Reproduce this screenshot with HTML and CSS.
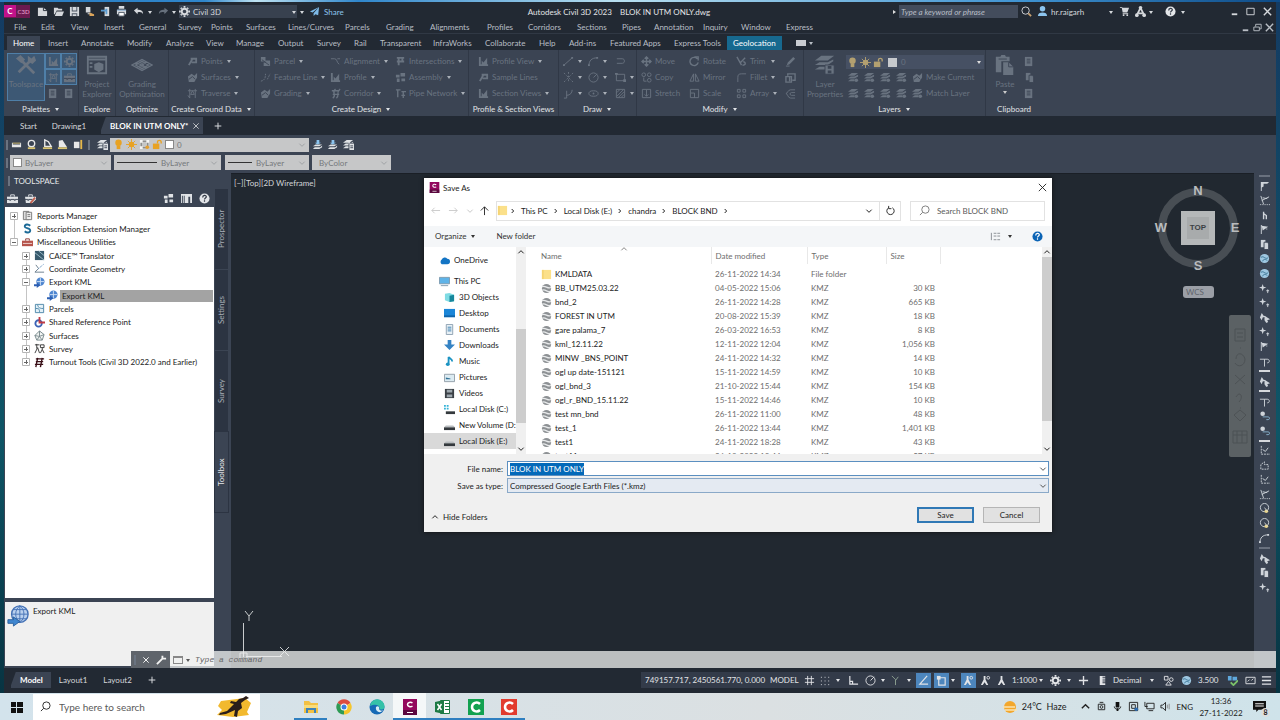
FILE: index.html
```html
<!DOCTYPE html>
<html lang="en">
<head>
    <meta charset="UTF-8">
    <meta name="viewport" content="width=device-width, initial-scale=1.0">
    <title>Autodesk Civil 3D 2023 - BLOK IN UTM ONLY.dwg</title>
    <link rel="stylesheet" href="styles.css">
</head>
<body>

<!-- Icon sprite -->
<svg class="sprite" aria-hidden="true">
    <symbol id="new" viewBox="0 0 12 12"><path fill="currentColor" d="M1 2h6l4 3v6H1z"/><path stroke="#222933" d="M7 2v3h4"/></symbol>
    <symbol id="open" viewBox="0 0 12 12"><path fill="currentColor" d="M1 2h4l1 1h4v2H4L2 9H1zM4 6h8l-2 5H2z"/></symbol>
    <symbol id="save" viewBox="0 0 12 12"><path fill="currentColor" d="M1 1h10v10H1z"/><path fill="#4c5563" d="M3 1h1v4h4V1h1v5H3zM3 8h6v3H8V9H4v2H3z"/></symbol>
    <symbol id="saveas" viewBox="0 0 12 12"><path fill="currentColor" d="M2 1h5v6H2zM4 8h4v1H4z"/><path fill="#d9a35a" d="M6 7l5 2v2H6z"/></symbol>
    <symbol id="export" viewBox="0 0 12 12"><path fill="currentColor" d="M5 1h5v10H5z"/><path stroke="#5b9bd0" stroke-width="2" d="M1 5h5M7 3v6"/></symbol>
    <symbol id="print" viewBox="0 0 12 12"><path fill="#d7dbe0" d="M3 0h6v3H3zM1 4h10v5H1z"/><path fill="#7fa8cf" d="M1 4h10v1H1z"/><path fill="#fff" stroke="#4c5563" d="M3 7h6v4H3z"/></symbol>
    <symbol id="undo" viewBox="0 0 12 12"><path fill="currentColor" d="M1 5l4-3v2c4 0 6 1 6 5-1-2-3-3-6-2v2z"/></symbol>
    <symbol id="redo" viewBox="0 0 12 12"><path fill="currentColor" d="M11 5L7 2v2C3 4 1 5 1 9c1-2 3-3 6-2v2z"/></symbol>
    <symbol id="gear" viewBox="0 0 12 12"><circle cx="6" cy="6" r="3" stroke="currentColor" stroke-width="2"/><path stroke="currentColor" stroke-width="2" d="M6 0v2M6 10v2M0 6h2M10 6h2M2 2l1 1M9 9l1 1M2 10l1-1M9 3l1-1"/></symbol>
    <symbol id="plane" viewBox="0 0 12 12"><path fill="#7db9e8" d="M11 1L1 6l3 1zM11 1L5 8v3l2-2 3 1z"/></symbol>
    <symbol id="caret" viewBox="0 0 6 6"><path fill="currentColor" d="M1 2h4L3 5z"/></symbol>
    <symbol id="search" viewBox="0 0 12 12"><circle cx="7" cy="5" r="4" stroke="currentColor"/><path stroke="currentColor" d="M4 8l-3 3"/></symbol>
    <symbol id="searchr" viewBox="0 0 12 12"><circle cx="5" cy="5" r="4" stroke="currentColor"/><path stroke="#c8a070" stroke-width="2" d="M8 8l3 3"/></symbol>
    <symbol id="user" viewBox="0 0 12 12"><circle cx="6" cy="3" r="3" fill="#8cc4ee"/><path fill="#8cc4ee" d="M1 11c0-3 2-4 5-4s5 1 5 4z"/></symbol>
    <symbol id="cart" viewBox="0 0 12 12"><path fill="currentColor" d="M1 1h2l1 1h7L9 7H4L3 2H1zM4 8h6v1H4z"/><circle cx="5" cy="10" r="1" fill="currentColor"/><circle cx="9" cy="10" r="1" fill="currentColor"/></symbol>
    <symbol id="adsk" viewBox="0 0 12 12"><path stroke="currentColor" stroke-width="2" d="M6 2L2 10M6 2l4 8M4 8h4"/><circle cx="6" cy="2" r="2" fill="currentColor"/><circle cx="2" cy="10" r="2" fill="currentColor"/><circle cx="10" cy="10" r="2" fill="currentColor"/></symbol>
    <symbol id="help" viewBox="0 0 12 12"><circle cx="6" cy="6" r="5.5" fill="#e4e6e9"/><path stroke="#333b47" stroke-width="1.3" d="M4 5c0-3 4-3 4-1 0 1.400-2 1.400-2 3M6 8v1.500"/></symbol>
    <symbol id="helpb" viewBox="0 0 12 12"><circle cx="6" cy="6" r="5.500" fill="#0a63b5"/><path stroke="#fff" stroke-width="1.300" d="M4 5c0-3 4-3 4-1 0 1.400-2 1.400-2 3M6 8v1.500"/></symbol>
    <symbol id="min" viewBox="0 0 12 12"><path stroke="currentColor" stroke-width="2" d="M3 9h6"/></symbol>
    <symbol id="max" viewBox="0 0 12 12"><path stroke="currentColor" d="M2 2.500h8v7H2z"/></symbol>
    <symbol id="restore" viewBox="0 0 12 12"><path stroke="currentColor" d="M2 5.500h6v4H2zM4 5V2.500h6v5H8"/></symbol>
    <symbol id="x" viewBox="0 0 12 12"><path stroke="currentColor" stroke-width="1.500" d="M2 2l8 8M10 2l-8 8"/></symbol>
    <symbol id="xthin" viewBox="0 0 12 12"><path stroke="currentColor" d="M2 2l8 8M10 2l-8 8"/></symbol>
    <symbol id="plus" viewBox="0 0 12 12"><path stroke="currentColor" stroke-width="1.500" d="M6 1v10M1 6h10"/></symbol>
    <symbol id="tools" viewBox="0 0 24 24"><path stroke="currentColor" stroke-width="3" d="M6 6l15 15M17 7L4 20"/><path fill="currentColor" d="M1 5l5-4 5 5-4 4zM14 2l4 3 3-3 2 5-4 4-5-3z"/></symbol>
    <symbol id="explorer" viewBox="0 0 24 24"><path stroke="currentColor" stroke-width="2" d="M2 3h20v18H2zM2 6h20"/><path fill="currentColor" d="M14 9l5 2v6l-5 3-5-3v-6zM4 9h3v2H4zM4 13h3v2H4z"/></symbol>
    <symbol id="grading" viewBox="0 0 24 24"><path stroke="currentColor" stroke-width="1.500" d="M1 12l11-6 11 6-11 6zM5 12l7-4 7 4-7 4zM6 9l11 6M17 9L6 15"/><circle cx="12" cy="12" r="2" stroke="currentColor"/></symbol>
    <symbol id="flag" viewBox="0 0 12 12"><path stroke="currentColor" stroke-width="2" d="M2 10l4-7M4 3h6v4H5"/></symbol>
    <symbol id="surf" viewBox="0 0 12 12"><path fill="currentColor" d="M1 5l4-3 3 2 3-3v5l-3 5H2z"/><path stroke="#3b4453" d="M2 8l4-3 3 3"/></symbol>
    <symbol id="trav" viewBox="0 0 12 12"><path stroke="currentColor" d="M1 3h10M3 1v10M9 1v10M1 8l2 3M6 3l-2 4h4z"/></symbol>
    <symbol id="parcel" viewBox="0 0 12 12"><path fill="currentColor" d="M1 1h5v5H1zM6 5h5v6H4V7h2z"/><path stroke="#3b4453" d="M2 4l8 6"/></symbol>
    <symbol id="line" viewBox="0 0 12 12"><path stroke="currentColor" d="M1 10l9-8"/><path fill="currentColor" d="M0 9h2v2H0zM9 1h2v2H9z"/></symbol>
    <symbol id="feat" viewBox="0 0 12 12"><path stroke="currentColor" stroke-dasharray="2 1" d="M1 10c4-1 5-3 5-8M8 8l3-6"/></symbol>
    <symbol id="align" viewBox="0 0 12 12"><path stroke="currentColor" d="M1 3h4c3 0 2 4 5 6M8 3h3"/></symbol>
    <symbol id="prof" viewBox="0 0 12 12"><path fill="currentColor" d="M1 1h2v8h8v2H1zM4 5l2 2 4-5v7H4z"/></symbol>
    <symbol id="corr" viewBox="0 0 12 12"><path stroke="currentColor" stroke-width="1.500" d="M3 11C8 8 1 5 6 1M7 11c4-3-1-6 4-10M2 3h8M3 7h7"/></symbol>
    <symbol id="inter" viewBox="0 0 12 12"><path stroke="currentColor" stroke-width="2" d="M2 2h8M2 6h8M4 1v9M8 1v6"/></symbol>
    <symbol id="assem" viewBox="0 0 12 12"><path fill="currentColor" d="M1 3h4v3H1zM6 1h5v4H6zM2 7h3v4H2zM7 7h4v3H7z"/></symbol>
    <symbol id="pipe" viewBox="0 0 12 12"><path stroke="currentColor" stroke-width="1.500" d="M1 2h5M3 2v8M7 4h5M9 4v7M7 8h4"/></symbol>
    <symbol id="arc" viewBox="0 0 12 12"><path stroke="currentColor" d="M1 11c0-6 3-9 9-9"/><path fill="currentColor" d="M0 9h2v2H0zM9 1h2v2H9z"/></symbol>
    <symbol id="poly" viewBox="0 0 12 12"><path stroke="currentColor" d="M2 3h6c3 0 3 5 0 5H2"/></symbol>
    <symbol id="pts" viewBox="0 0 12 12"><path stroke="currentColor" stroke-dasharray="2 2" d="M1 1l10 10M11 1L1 11M6 0v12"/></symbol>
    <symbol id="circ" viewBox="0 0 12 12"><circle cx="6" cy="6" r="5" stroke="currentColor"/><path stroke="currentColor" d="M6 6l4-4"/></symbol>
    <symbol id="rect" viewBox="0 0 12 12"><path stroke="currentColor" d="M1.500 2.500h9v7h-9z"/><path fill="currentColor" d="M0 1h3v2H0zM9 8h3v3H9z"/></symbol>
    <symbol id="pline" viewBox="0 0 12 12"><path stroke="currentColor" d="M1 11h3V3M4 8c4 0 6-3 6-6"/></symbol>
    <symbol id="ell" viewBox="0 0 12 12"><ellipse cx="6" cy="6" rx="5" ry="3" stroke="currentColor"/><circle cx="6" cy="6" r="1" fill="currentColor"/></symbol>
    <symbol id="hatch" viewBox="0 0 12 12"><path stroke="currentColor" d="M1.500 1.500h9v9h-9zM2 5l3-3M2 9l7-7M4 10l6-6M7 10l3-3"/></symbol>
    <symbol id="move" viewBox="0 0 12 12"><path stroke="currentColor" stroke-width="1.500" d="M6 1v10M1 6h10M4 3l2-2 2 2M4 9l2 2 2-2M3 4L1 6l2 2M9 4l2 2-2 2"/></symbol>
    <symbol id="copy" viewBox="0 0 12 12"><circle cx="3" cy="3" r="2" stroke="currentColor"/><circle cx="9" cy="3" r="2" stroke="currentColor"/><circle cx="9" cy="9" r="2" stroke="currentColor"/><path stroke="currentColor" d="M3 6v4h3"/></symbol>
    <symbol id="stretch" viewBox="0 0 12 12"><path stroke="currentColor" d="M1.500 1.500h9v9h-9zM6 2v7M4 7l2 2 2-2"/></symbol>
    <symbol id="rotate" viewBox="0 0 12 12"><path stroke="currentColor" stroke-width="1.500" d="M9 3a4.500 4.500 0 1 0 1 4M6 1h4v4"/></symbol>
    <symbol id="mirror" viewBox="0 0 12 12"><path stroke="currentColor" d="M5 2v8H1zM7 2v8h4z"/></symbol>
    <symbol id="scale" viewBox="0 0 12 12"><path stroke="currentColor" d="M1.500 1.500h9v9h-9zM2 5.500h4v5"/></symbol>
    <symbol id="trim" viewBox="0 0 12 12"><path stroke="currentColor" stroke-width="1.500" d="M1 1l5 9M10 2L5 7M7 10c4 0 4-3 1-4"/></symbol>
    <symbol id="fillet" viewBox="0 0 12 12"><path stroke="currentColor" d="M2 11V6c0-3 1-4 4-4h5"/></symbol>
    <symbol id="array" viewBox="0 0 12 12"><path stroke="currentColor" d="M1.500 1.500h3v3h-3zM7.500 1.500h3v3h-3zM1.500 7.500h3v3h-3zM7.500 7.500h3v3h-3z"/></symbol>
    <symbol id="erase" viewBox="0 0 12 12"><path fill="currentColor" d="M9 1l2 2-6 6-2-2zM3 7l2 2-3 1z"/><path stroke="currentColor" d="M1 11h4"/></symbol>
    <symbol id="box" viewBox="0 0 12 12"><path stroke="currentColor" stroke-width="1.500" d="M1 5h6v6H1zM3 4V2h8v7H8M5 5v5"/></symbol>
    <symbol id="offset" viewBox="0 0 12 12"><path stroke="currentColor" d="M11 2H6C3 2 3 6 1 6c2 0 2 5 5 5h5M11 5H7c-2 0-2 3 0 3h4"/></symbol>
    <symbol id="layers" viewBox="0 0 24 24"><path fill="currentColor" d="M1 7l7-5h14l-7 5zM1 12l5-3h9l6-3v2l-6 4zM1 17l5-3h7v3z"/><path fill="currentColor" stroke="#3b4453" d="M12 12h10v10H12z"/><path fill="#3b4453" d="M15 13h4v3h-4zM15 18h4v3h-4z"/></symbol>
    <symbol id="lay" viewBox="0 0 12 12"><path fill="currentColor" d="M0 4l4-3h7L7 4zM0 7l3-2h4l4-2v2L7 7zM0 10l3-2h4v2z"/><circle cx="9" cy="9" r="2" fill="currentColor"/></symbol>
    <symbol id="layp" viewBox="0 0 12 12"><path fill="currentColor" d="M0 4l4-3h7L7 4zM0 7l3-2h4l4-2v1H6v3H0zM0 10l3-2h3v2z"/><path fill="currentColor" d="M7 5h5v7H7z"/><path stroke="#3b4453" d="M8 7.500h3M8 9.500h3"/></symbol>
    <symbol id="layu" viewBox="0 0 12 12"><path fill="currentColor" d="M1 8l3-2h7L8 8zM1 11l2-2h6l2-2v2l-3 2z"/><path fill="#8cc4ee" d="M5 1h3v3h2L6 6 3 4h2z"/></symbol>
    <symbol id="paste" viewBox="0 0 24 24"><path fill="currentColor" d="M2 3h5l1-2h4l1 2h4v5H8v12H2zM10 9h6l5 5v9H10z"/><path stroke="#3b4453" d="M5 5.500h9M16 9v5h5"/></symbol>
    <symbol id="doc" viewBox="0 0 12 12"><path fill="currentColor" d="M2 1h5v8H2z"/><path fill="currentColor" stroke="#3b4453" d="M5.500 3.500h4l1 2v6h-5z"/></symbol>
    <symbol id="list" viewBox="0 0 12 12"><path fill="currentColor" d="M1 1h8v10H1z"/><path stroke="#3b4453" d="M3 3.500h4M3 5.500h4M3 7.500h4"/></symbol>
    <symbol id="panes" viewBox="0 0 12 12"><path fill="currentColor" d="M0 1h12v10h-2V4H8v7H4V3H3v8H2V3H1v8H0z"/></symbol>
    <symbol id="bulb" viewBox="0 0 12 12"><circle cx="6" cy="4" r="3.500" fill="currentColor"/><path fill="currentColor" d="M4 7h4v4H4z"/></symbol>
    <symbol id="sun" viewBox="0 0 12 12"><circle cx="6" cy="6" r="3" fill="currentColor"/><path stroke="currentColor" d="M6 0v12M0 6h12M2 2l8 8M10 2l-8 8"/></symbol>
    <symbol id="lock" viewBox="0 0 12 12"><path fill="currentColor" d="M1 5h7v6H1z"/><path stroke="currentColor" stroke-width="1.500" d="M6 5V3c0-2 4-2 4 0v2"/></symbol>
    <symbol id="freeze" viewBox="0 0 12 12"><path stroke="#777" stroke-width="1" d="M2.500 2.500h7v7h-7z"/><path fill="#f5f5f5" d="M1 1h3v3H1zM8 1h3v3H8zM1 8h3v3H1z"/><circle cx="9" cy="9" r="2" fill="#e5a030"/></symbol>
    <symbol id="dim1" viewBox="0 0 12 12"><path fill="#e8e8e8" d="M1 4h1v5H1zM10 4h1v5h-1zM2 6h8v3H2z"/><path stroke="#d9c370" d="M2 4.500h8"/></symbol>
    <symbol id="dim2" viewBox="0 0 12 12"><circle cx="6" cy="5" r="3.500" stroke="#e8e8e8" stroke-width="1.500"/><path stroke="#d9c370" stroke-width="2" d="M2 10h8"/></symbol>
    <symbol id="dim3" viewBox="0 0 12 12"><path stroke="#e8e8e8" stroke-width="1.500" d="M3 1v7h7L7 3z"/><path stroke="#d9c370" stroke-width="2" d="M1 10h10"/></symbol>
    <symbol id="dim4" viewBox="0 0 12 12"><path fill="#e8e8e8" d="M2 2l4-1 5 8H2z"/><path stroke="#d9c370" stroke-width="2" d="M1 10h10"/></symbol>
    <symbol id="dim5" viewBox="0 0 12 12"><path fill="#e8e8e8" d="M1 3h6v7H1z"/><path stroke="#e5b84a" stroke-width="2" d="M9 1v10"/></symbol>
    <symbol id="toolbox" viewBox="0 0 12 12"><path fill="currentColor" d="M0 4h12v7H0z"/><path stroke="currentColor" d="M4 4V2h4v2"/><path stroke="#3b4453" d="M0 7h3v1h1V7h4v1h1V7h3"/></symbol>
    <symbol id="toolpen" viewBox="0 0 12 12"><path fill="currentColor" d="M0 4h12v3L8 11H1z"/><path stroke="currentColor" d="M4 4V2h4v2"/><path stroke="#3b4453" d="M0 7h3v1h1V7h4"/><path stroke="#c4614f" stroke-width="2" d="M11 5l-5 6"/></symbol>
    <symbol id="report" viewBox="0 0 12 12"><path fill="#ddd" stroke="#777" d="M1.500 1.500h6v9h-6z"/><path fill="#eee" stroke="#777" d="M4.500 2.500h6v8h-6zM6 5h3M6 7h3"/></symbol>
    <symbol id="sub" viewBox="0 0 12 12"><path stroke="#1c6a97" stroke-width="2" d="M9 3C7 1 3 1 3 4c0 2 6 1 6 4 0 3-4 3-6 1"/></symbol>
    <symbol id="redbox" viewBox="0 0 12 12"><path fill="#b5534b" d="M0 4h12v6H0z"/><path stroke="#8b3832" d="M4 4V2h4v2"/><path stroke="#f0d8d5" d="M1 7h10"/></symbol>
    <symbol id="caice" viewBox="0 0 12 12"><path fill="#38596c" d="M1 1h10v10H1z"/><path stroke="#9fc0cc" d="M1 3l10 8M5 1l6 5"/></symbol>
    <symbol id="cogo" viewBox="0 0 12 12"><path stroke="#66798a" d="M2 2l3 4-4 4h10"/><path stroke="#3f79b5" stroke-dasharray="1 1" d="M5 6l6-5"/></symbol>
    <symbol id="globe" viewBox="0 0 12 12"><circle cx="7" cy="5" r="4.500" fill="#4f86d0"/><path stroke="#cfe0f5" d="M3 5h8M7 1v8"/><path fill="#2c5fb3" d="M0 8h3V6l4 3-4 3v-2H0z"/></symbol>
    <symbol id="bigglobe" viewBox="0 0 24 24"><circle cx="14" cy="10" r="9" fill="#b9d0ee" stroke="#4471b5" stroke-width="1.500"/><path stroke="#4471b5" d="M5 10h18M7 5h14M7 15h14M14 1v18M14 1c-6 4-6 14 0 18 6-4 6-14 0-18"/><path fill="#3f86cf" stroke="#2a5f9c" d="M1 16h6v-3l7 5-7 5v-3H1z"/></symbol>
    <symbol id="parc" viewBox="0 0 12 12"><path fill="#e2f0f7" stroke="#4c86a8" d="M1.500 1.500h9v9h-9zM2 6c4 0 4 1 4 4M4 2c0 3 3 4 6 4"/></symbol>
    <symbol id="shared" viewBox="0 0 12 12"><circle cx="5" cy="7" r="3.500" stroke="#3a62b5" stroke-width="2"/><path stroke="#c03a44" stroke-width="2" d="M6 0v6h6"/></symbol>
    <symbol id="surface" viewBox="0 0 12 12"><path fill="#eef2f0" stroke="#75858a" d="M1 6l5-5 5 4-2 6H3zM1 6l5 1 5-2M6 1v6l3 4M6 7l-3 4"/></symbol>
    <symbol id="survey" viewBox="0 0 12 12"><path stroke="#333" d="M1 2h5M3 1v5M1 11l3-6 2 6M7 2h4v3H7zM9 5v2l-2 4M9 7l2 4"/></symbol>
    <symbol id="turnout" viewBox="0 0 12 12"><path stroke="#3b1018" stroke-width="1.500" d="M4 1L2 11M9 1L7 11M2 2h9M2 5h8M1 8h9"/></symbol>
    <symbol id="exp" viewBox="0 0 8 8"><path fill="#fff" stroke="#b5b5b5" d="M.5.5h7v7h-7z"/><path stroke="#666" d="M2 4.500h4M4.500 2v4"/></symbol>
    <symbol id="col" viewBox="0 0 8 8"><path fill="#fff" stroke="#b5b5b5" d="M.5.5h7v7h-7z"/><path stroke="#666" d="M2 4.500h4"/></symbol>
    <symbol id="chev" viewBox="0 0 12 12"><path stroke="currentColor" stroke-width="1.500" d="M2 4l4 4 4-4"/></symbol>
    <symbol id="chevup" viewBox="0 0 12 12"><path stroke="currentColor" stroke-width="1.500" d="M2 8l4-4 4 4"/></symbol>
    <symbol id="chevr" viewBox="0 0 12 12"><path stroke="currentColor" stroke-width="1.500" d="M4 3l3 3-3 3"/></symbol>
    <symbol id="left" viewBox="0 0 12 12"><path stroke="currentColor" d="M11 6H2M5 3L2 6l3 3"/></symbol>
    <symbol id="right" viewBox="0 0 12 12"><path stroke="currentColor" d="M1 6h9M7 3l3 3-3 3"/></symbol>
    <symbol id="up" viewBox="0 0 12 12"><path stroke="currentColor" d="M6 11V2M2 6l4-4 4 4"/></symbol>
    <symbol id="refresh" viewBox="0 0 12 12"><path stroke="currentColor" d="M4 3a4 4 0 1 0 4 0M4 1v3h3"/></symbol>
    <symbol id="folder" viewBox="0 0 12 12"><path fill="#fbe08a" d="M1 1h10v10H1z"/><path fill="#f5d474" d="M1 1h2v10H1z"/></symbol>
    <symbol id="kmz" viewBox="0 0 12 12"><circle cx="6" cy="6" r="5" fill="#8d9194"/><path stroke="#e9ebec" stroke-width="1.300" d="M1 4c4-2 6 3 10 1M1 8c4-2 6 3 9 1"/></symbol>
    <symbol id="cloud" viewBox="0 0 12 12"><path fill="#1374c4" d="M3 10a3 3 0 0 1 0-5 3.500 3.500 0 0 1 6-1 3 3 0 0 1 0 6z"/></symbol>
    <symbol id="pc" viewBox="0 0 12 12"><path fill="#5eb3e8" stroke="#7d99ad" d="M.5 1.500h11v7H.5z"/><path stroke="#7d99ad" d="M2 10.500h8"/></symbol>
    <symbol id="obj" viewBox="0 0 12 12"><path fill="#7fdbe3" d="M1 2l5-1 5 2v7l-5 1-5-2z"/><path fill="#16869b" d="M6 4l5-1v7l-5 1z"/></symbol>
    <symbol id="desk" viewBox="0 0 12 12"><path fill="#1b86d8" d="M0 1h12v9H0z"/><path fill="#0f65ab" d="M0 8h12v2H0z"/></symbol>
    <symbol id="docs" viewBox="0 0 12 12"><path fill="#e8f0f5" stroke="#8a9faf" d="M2.500.5h7v11h-7z"/><path stroke="#3c7fb0" d="M4 3.500h4M4 5.500h4M4 7.500h4"/></symbol>
    <symbol id="down" viewBox="0 0 12 12"><path fill="#3583c4" d="M4 0h4v5h4l-6 6-6-6h4z"/></symbol>
    <symbol id="music" viewBox="0 0 12 12"><path stroke="#1b93c2" stroke-width="2" d="M5 10V1c1 2 4 2 4 5"/><circle cx="4" cy="9" r="2" fill="#1b93c2"/></symbol>
    <symbol id="pics" viewBox="0 0 12 12"><path fill="#dcebf2" stroke="#8f9ba5" d="M.5 2.500h11v8H.5z"/><path fill="#2f7196" d="M2 6l5 1v1H2z"/></symbol>
    <symbol id="video" viewBox="0 0 12 12"><path fill="#3a3f45" d="M1 1h10v10H1z"/><path fill="#9da7ae" d="M3 2h6v3H3zM3 7h6v3H3z"/></symbol>
    <symbol id="disk" viewBox="0 0 12 12"><path fill="#b9bdc0" d="M2 6h8l2 2H0z"/><path fill="#34393d" d="M0 8h12v3H0z"/></symbol>
    <symbol id="diskc" viewBox="0 0 12 12"><path fill="#36b4d8" d="M0 1h2v2H0zM3 1h2v2H3zM0 4h2v2H0zM3 4h2v2H3z"/><path fill="#34393d" d="M2 8h10v3H2z"/></symbol>
    <symbol id="view" viewBox="0 0 12 12"><path stroke="#858b91" d="M1.500 2v8M4 2.500h3M8 2.500h3M4 5.500h3M8 5.500h3M4 9.500h3M8 9.500h3"/></symbol>
    <symbol id="r1" viewBox="0 0 12 12"><path fill="currentColor" d="M2 1h9L9 3H5v3L3 7v4H2z"/></symbol>
    <symbol id="r2" viewBox="0 0 12 12"><path stroke="currentColor" d="M2 1l3 9M11 2L3 6M4 3l5 1"/><path stroke="currentColor" stroke-dasharray="1 1" d="M1 10.500h11"/></symbol>
    <symbol id="r3" viewBox="0 0 12 12"><path stroke="currentColor" stroke-width="1.500" d="M5 2v8M5 4l3 2v4"/></symbol>
    <symbol id="r4" viewBox="0 0 12 12"><path fill="currentColor" d="M2 1h1v10H2zM3 2l7 1-6 4zM8 5h1v1H8z"/></symbol>
    <symbol id="r5" viewBox="0 0 12 12"><circle cx="6" cy="6" r="5" fill="#9fc8e2"/><path stroke="#34708f" d="M2 5c3-3 5 3 8 0M4 9c1-3 3-2 5-1"/></symbol>
    <symbol id="r6" viewBox="0 0 12 12"><path fill="currentColor" d="M4 1l1 3 3 1-3 1-1 3-1-3-3-1 3-1zM8 8h3v1H8z"/><path stroke="currentColor" d="M9.500 7v4"/></symbol>
    <symbol id="r7" viewBox="0 0 12 12"><path fill="currentColor" d="M3 1l2 3 3 1-4 1-1 3-2-3zM6 4l6 4-3 1 1 2-2 1-2-3z"/></symbol>
    <symbol id="r8" viewBox="0 0 12 12"><path stroke="currentColor" d="M1 3.500h5v8M6 3.500h3c3 0 3 4 0 4"/></symbol>
    <symbol id="r9" viewBox="0 0 12 12"><circle cx="4" cy="4" r="2.500" fill="currentColor"/><path stroke="#8ab3d0" d="M4 7.500h6c2 0 2 3 0 3H8"/></symbol>
    <symbol id="r10" viewBox="0 0 12 12"><path stroke="currentColor" stroke-dasharray="2 1" d="M2.500 1v9H12"/><path stroke="currentColor" d="M4 5l3 2 3-4"/></symbol>
    <symbol id="r11" viewBox="0 0 12 12"><circle cx="6" cy="5" r="4.500" stroke="currentColor"/><circle cx="8" cy="9" r="2" fill="#e8d48a"/><path stroke="currentColor" d="M6 5l3 4"/></symbol>
    <symbol id="r12" viewBox="0 0 12 12"><path stroke="currentColor" stroke-dasharray="2 1" d="M2 10V5l4-3v3h4v5z"/></symbol>
    <symbol id="grid" viewBox="0 0 12 12"><path stroke="currentColor" d="M4 1v10M8 1v10M1 4h10M1 8h10"/></symbol>
    <symbol id="dots" viewBox="0 0 12 12"><path stroke="currentColor" stroke-dasharray="1 3" d="M1 2.500h10M1 6.500h10M1 10.500h10"/></symbol>
    <symbol id="ortho" viewBox="0 0 12 12"><path stroke="currentColor" stroke-width="1.300" d="M2 1v9h9M2 7h3v3"/></symbol>
    <symbol id="iso" viewBox="0 0 12 12"><path stroke="#8fa394" d="M6 11V5L2 1M6 6l3-4"/></symbol>
    <symbol id="angle" viewBox="0 0 12 12"><path stroke="currentColor" stroke-width="1.300" d="M10 1L2 10h9"/></symbol>
    <symbol id="osnap" viewBox="0 0 12 12"><path stroke="currentColor" stroke-width="1.300" d="M3 3h7v8H3z"/><path fill="currentColor" d="M1 1h4v4H1z"/></symbol>
    <symbol id="anno" viewBox="0 0 12 12"><path fill="currentColor" d="M5 1h2v4l3 6H8L6 8l-2 3H2l3-6z"/></symbol>
    <symbol id="annov" viewBox="0 0 12 12"><path fill="currentColor" d="M4 1h2v4l3 6H7L5 8l-2 3H1l3-6z"/><circle cx="9" cy="3" r="1.500" stroke="currentColor"/></symbol>
    <symbol id="ruler" viewBox="0 0 12 12"><path fill="currentColor" d="M3 1h6v1H6v1h3v1H6v1h3v1H6v1h3v1H6v1h3v2H3z"/></symbol>
    <symbol id="shapes" viewBox="0 0 12 12"><path stroke="currentColor" d="M1.500 1.500h4v4h-4zM6 7l3 4H3z"/><circle cx="9" cy="5" r="2" stroke="currentColor"/></symbol>
    <symbol id="perf" viewBox="0 0 12 12"><path fill="#5fa8dd" d="M1 1h4v5H1zM6 2h5v4H6z"/><path stroke="#7cc26a" stroke-width="2" d="M4 8l3 3 5-5"/></symbol>
    <symbol id="clean" viewBox="0 0 12 12"><path stroke="currentColor" d="M1 2.500h10v7H1zM3 7l2-2M7 6l2-2"/></symbol>
    <symbol id="menu" viewBox="0 0 12 12"><path stroke="currentColor" stroke-width="1.500" d="M1 2h10M1 6h10M1 10h10"/></symbol>
    <symbol id="wrench" viewBox="0 0 12 12"><path stroke="currentColor" stroke-width="2" d="M1 11l6-6M7 2v3h4"/></symbol>
    <symbol id="civil" viewBox="0 0 16 16"><path fill="#93075d" d="M1 0h14v16H1z"/><path fill="#5b083f" d="M1 11h14v5H1z"/><path stroke="#fff" stroke-width="1.500" d="M10.500 4c-2-1.500-5-.5-5 1.500s3 3 5 1.500"/><path stroke="#fff" d="M5 13.500h6"/></symbol>
</svg>

<main class="window">

    <!-- Title bar -->
    <header class="titlebar">
        <div class="quick">
            <span class="app-badge"><b>C</b> C3D</span>
            <svg class="i"><use href="#new"/></svg>
            <svg class="i"><use href="#open"/></svg>
            <svg class="i"><use href="#save"/></svg>
            <svg class="i"><use href="#saveas"/></svg>
            <svg class="i"><use href="#export"/></svg>
            <svg class="i"><use href="#print"/></svg>
            <svg class="i"><use href="#undo"/></svg>
            <svg class="c"><use href="#caret"/></svg>
            <svg class="i dim"><use href="#redo"/></svg>
            <svg class="c"><use href="#caret"/></svg>
            <button class="workspace"><svg class="i"><use href="#gear"/></svg>Civil 3D<svg class="c"><use href="#caret"/></svg></button>
            <svg class="c"><use href="#caret"/></svg>
            <button class="share"><svg class="i"><use href="#plane"/></svg>Share</button>
        </div>
        <h1>Autodesk Civil 3D 2023 &nbsp;&nbsp; BLOK IN UTM ONLY.dwg</h1>
        <div class="infocenter">
            <span class="tri"></span>
            <input type="text" placeholder="Type a keyword or phrase" aria-label="Search help">
            <svg class="i"><use href="#searchr"/></svg>
            <svg class="i"><use href="#user"/></svg>
            <span>hr.raigarh</span>
            <svg class="c"><use href="#caret"/></svg>
            <svg class="i"><use href="#cart"/></svg>
            <svg class="i"><use href="#adsk"/></svg>
            <svg class="c"><use href="#caret"/></svg>
            <svg class="i"><use href="#help"/></svg>
            <svg class="c"><use href="#caret"/></svg>
            <button aria-label="Minimize"><svg class="i"><use href="#min"/></svg></button>
            <button aria-label="Maximize"><svg class="i"><use href="#max"/></svg></button>
            <button aria-label="Close"><svg class="i"><use href="#x"/></svg></button>
        </div>
    </header>

    <!-- Menu bar -->
    <nav class="menubar">
        <a href="#">File</a><a href="#">Edit</a><a href="#">View</a><a href="#">Insert</a><a href="#">General</a><a href="#">Survey</a><a href="#">Points</a><a href="#">Surfaces</a><a href="#">Lines/Curves</a><a href="#">Parcels</a><a href="#">Grading</a><a href="#">Alignments</a><a href="#">Profiles</a><a href="#">Corridors</a><a href="#">Sections</a><a href="#">Pipes</a><a href="#">Annotation</a><a href="#">Inquiry</a><a href="#">Window</a><a href="#">Express</a>
        <div class="doc-buttons">
            <button aria-label="Minimize drawing"><svg class="i"><use href="#min"/></svg></button>
            <button aria-label="Restore drawing"><svg class="i"><use href="#restore"/></svg></button>
            <button aria-label="Close drawing"><svg class="i"><use href="#x"/></svg></button>
        </div>
    </nav>

    <!-- Ribbon tabs -->
    <nav class="ribbon-tabs">
        <a href="#" class="active">Home</a><a href="#">Insert</a><a href="#">Annotate</a><a href="#">Modify</a><a href="#">Analyze</a><a href="#">View</a><a href="#">Manage</a><a href="#">Output</a><a href="#">Survey</a><a href="#">Rail</a><a href="#">Transparent</a><a href="#">InfraWorks</a><a href="#">Collaborate</a><a href="#">Help</a><a href="#">Add-ins</a><a href="#">Featured Apps</a><a href="#">Express Tools</a><a href="#" class="geo">Geolocation</a>
        <span class="ribbon-min"><i></i><svg class="c"><use href="#caret"/></svg></span>
    </nav>

    <!-- Ribbon -->
    <section class="ribbon">
        <div class="panel p-palettes">
            <div class="tools">
                <button class="big on"><svg class="b"><use href="#tools"/></svg>Toolspace</button>
                <div class="mini">
                    <button class="on"><svg class="i"><use href="#prof"/></svg></button>
                    <button class="on"><svg class="i"><use href="#gear"/></svg></button>
                    <button class="on"><svg class="i"><use href="#trav"/></svg></button>
                    <button class="on"><svg class="i"><use href="#toolbox"/></svg></button>
                    <button><svg class="i"><use href="#list"/></svg></button>
                    <button><svg class="i"><use href="#list"/></svg></button>
                </div>
            </div>
            <h2>Palettes <svg class="c"><use href="#caret"/></svg></h2>
        </div>
        <div class="panel p-explore">
            <div class="tools"><button class="big"><svg class="b"><use href="#explorer"/></svg>Project<br>Explorer</button></div>
            <h2>Explore</h2>
        </div>
        <div class="panel p-optimize">
            <div class="tools"><button class="big"><svg class="b"><use href="#grading"/></svg>Grading<br>Optimization</button></div>
            <h2>Optimize</h2>
        </div>
        <div class="panel p-ground">
            <div class="tools grid-tools">
                <button><svg class="i"><use href="#flag"/></svg>Points<svg class="c"><use href="#caret"/></svg></button>
                <button><svg class="i"><use href="#surf"/></svg>Surfaces<svg class="c"><use href="#caret"/></svg></button>
                <button><svg class="i"><use href="#trav"/></svg>Traverse<svg class="c"><use href="#caret"/></svg></button>
            </div>
            <h2>Create Ground Data <svg class="c"><use href="#caret"/></svg></h2>
        </div>
        <div class="panel p-design">
            <div class="tools grid-tools">
                <button><svg class="i"><use href="#parcel"/></svg>Parcel<svg class="c"><use href="#caret"/></svg></button>
                <button><svg class="i"><use href="#feat"/></svg>Feature Line<svg class="c"><use href="#caret"/></svg></button>
                <button><svg class="i"><use href="#surf"/></svg>Grading<svg class="c"><use href="#caret"/></svg></button>
                <button><svg class="i"><use href="#align"/></svg>Alignment<svg class="c"><use href="#caret"/></svg></button>
                <button><svg class="i"><use href="#prof"/></svg>Profile<svg class="c"><use href="#caret"/></svg></button>
                <button><svg class="i"><use href="#corr"/></svg>Corridor<svg class="c"><use href="#caret"/></svg></button>
                <button><svg class="i"><use href="#inter"/></svg>Intersections<svg class="c"><use href="#caret"/></svg></button>
                <button><svg class="i"><use href="#assem"/></svg>Assembly<svg class="c"><use href="#caret"/></svg></button>
                <button><svg class="i"><use href="#pipe"/></svg>Pipe Network<svg class="c"><use href="#caret"/></svg></button>
            </div>
            <h2>Create Design <svg class="c"><use href="#caret"/></svg></h2>
        </div>
        <div class="panel p-profile">
            <div class="tools grid-tools">
                <button><svg class="i"><use href="#prof"/></svg>Profile View<svg class="c"><use href="#caret"/></svg></button>
                <button><svg class="i"><use href="#flag"/></svg>Sample Lines</button>
                <button><svg class="i"><use href="#prof"/></svg>Section Views<svg class="c"><use href="#caret"/></svg></button>
            </div>
            <h2>Profile &amp; Section Views</h2>
        </div>
        <div class="panel p-draw">
            <div class="tools grid-tools">
                <button><svg class="i"><use href="#line"/></svg><svg class="c"><use href="#caret"/></svg></button>
                <button><svg class="i"><use href="#pts"/></svg><svg class="c"><use href="#caret"/></svg></button>
                <button><svg class="i"><use href="#pline"/></svg><svg class="c"><use href="#caret"/></svg></button>
                <button><svg class="i"><use href="#arc"/></svg><svg class="c"><use href="#caret"/></svg></button>
                <button><svg class="i"><use href="#circ"/></svg><svg class="c"><use href="#caret"/></svg></button>
                <button><svg class="i"><use href="#ell"/></svg><svg class="c"><use href="#caret"/></svg></button>
                <button><svg class="i"><use href="#poly"/></svg></button>
                <button><svg class="i"><use href="#rect"/></svg><svg class="c"><use href="#caret"/></svg></button>
                <button><svg class="i"><use href="#hatch"/></svg><svg class="c"><use href="#caret"/></svg></button>
            </div>
            <h2>Draw <svg class="c"><use href="#caret"/></svg></h2>
        </div>
        <div class="panel p-modify">
            <div class="tools grid-tools">
                <button><svg class="i"><use href="#move"/></svg>Move</button>
                <button><svg class="i"><use href="#copy"/></svg>Copy</button>
                <button><svg class="i"><use href="#stretch"/></svg>Stretch</button>
                <button><svg class="i"><use href="#rotate"/></svg>Rotate</button>
                <button><svg class="i"><use href="#mirror"/></svg>Mirror</button>
                <button><svg class="i"><use href="#scale"/></svg>Scale</button>
                <button class="wide"><svg class="i"><use href="#trim"/></svg>Trim<svg class="c"><use href="#caret"/></svg></button>
                <button class="wide"><svg class="i"><use href="#fillet"/></svg>Fillet<svg class="c"><use href="#caret"/></svg></button>
                <button class="wide"><svg class="i"><use href="#array"/></svg>Array<svg class="c"><use href="#caret"/></svg></button>
                <button><svg class="i"><use href="#erase"/></svg></button>
                <button><svg class="i"><use href="#box"/></svg></button>
                <button><svg class="i"><use href="#offset"/></svg></button>
            </div>
            <h2>Modify <svg class="c"><use href="#caret"/></svg></h2>
        </div>
        <div class="panel p-layers">
            <div class="tools">
                <button class="big"><svg class="b"><use href="#layers"/></svg>Layer<br>Properties</button>
                <div class="layer-tools">
                    <button class="layer-combo"><svg class="i y"><use href="#bulb"/></svg><svg class="i y"><use href="#sun"/></svg><svg class="i y"><use href="#lock"/></svg><i class="swatch"></i>0<svg class="c"><use href="#caret"/></svg></button>
                    <div class="layer-row">
                        <svg class="i"><use href="#lay"/></svg><svg class="i"><use href="#lay"/></svg><svg class="i"><use href="#lay"/></svg><svg class="i"><use href="#lay"/></svg>
                        <button><svg class="i"><use href="#surf"/></svg>Make Current</button>
                    </div>
                    <div class="layer-row">
                        <svg class="i"><use href="#lay"/></svg><svg class="i"><use href="#lay"/></svg><svg class="i"><use href="#lay"/></svg><svg class="i"><use href="#lay"/></svg>
                        <button><svg class="i"><use href="#lay"/></svg>Match Layer</button>
                    </div>
                </div>
            </div>
            <h2>Layers <svg class="c"><use href="#caret"/></svg></h2>
        </div>
        <div class="panel p-clip">
            <div class="tools">
                <button class="big"><svg class="b"><use href="#paste"/></svg>Paste<svg class="c"><use href="#caret"/></svg></button>
                <div class="grid-tools">
                    <button><svg class="i"><use href="#list"/></svg></button>
                    <button><svg class="i"><use href="#doc"/></svg></button>
                    <button><svg class="i"><use href="#list"/></svg></button>
                </div>
            </div>
            <h2>Clipboard</h2>
        </div>
    </section>

    <!-- Drawing tabs -->
    <nav class="doc-tabs">
        <a href="#">Start</a>
        <a href="#">Drawing1</a>
        <a href="#" class="active">BLOK IN UTM ONLY* <svg class="s"><use href="#xthin"/></svg></a>
        <button aria-label="New drawing"><svg class="s"><use href="#plus"/></svg></button>
    </nav>

    <!-- Toolbars -->
    <section class="toolbars">
        <div class="tb-row">
            <i class="grip"></i>
            <svg class="i"><use href="#dim1"/></svg>
            <svg class="i"><use href="#dim2"/></svg>
            <svg class="i"><use href="#dim3"/></svg>
            <svg class="i"><use href="#dim4"/></svg>
            <svg class="i"><use href="#dim5"/></svg>
            <i class="grip"></i>
            <svg class="i"><use href="#layp"/></svg>
            <button class="combo layer"><svg class="i o"><use href="#bulb"/></svg><svg class="i o"><use href="#sun"/></svg><svg class="i"><use href="#freeze"/></svg><svg class="i o"><use href="#lock"/></svg><i class="swatch"></i>0<svg class="s"><use href="#chev"/></svg></button>
            <svg class="i"><use href="#layu"/></svg>
            <svg class="i"><use href="#layu"/></svg>
            <svg class="i"><use href="#layp"/></svg>
        </div>
        <div class="tb-row props">
            <i class="grip"></i>
            <button class="combo color"><i class="swatch"></i>ByLayer<svg class="s"><use href="#chev"/></svg></button>
            <button class="combo ltype"><i class="rule"></i>ByLayer<svg class="s"><use href="#chev"/></svg></button>
            <button class="combo lweight"><i class="rule"></i>ByLayer<svg class="s"><use href="#chev"/></svg></button>
            <button class="combo plot">ByColor<svg class="s"><use href="#chev"/></svg></button>
        </div>
    </section>

    <section class="work">

        <!-- Toolspace -->
        <aside class="toolspace">
            <div class="ts-main">
                <h2><i class="grip"></i>TOOLSPACE</h2>
                <div class="ts-bar">
                    <svg class="i"><use href="#toolbox"/></svg>
                    <svg class="i"><use href="#toolpen"/></svg>
                    <svg class="i push"><use href="#assem"/></svg>
                    <svg class="i"><use href="#panes"/></svg>
                    <svg class="i"><use href="#help"/></svg>
                </div>
                <div class="tree-box">
                    <ul class="tree">
                        <li><svg class="e"><use href="#exp"/></svg><svg class="i"><use href="#report"/></svg><span>Reports Manager</span></li>
                        <li><i class="e"></i><svg class="i"><use href="#sub"/></svg><span>Subscription Extension Manager</span></li>
                        <li><svg class="e"><use href="#col"/></svg><svg class="i"><use href="#redbox"/></svg><span>Miscellaneous Utilities</span></li>
                        <li class="l1"><svg class="e"><use href="#exp"/></svg><svg class="i"><use href="#caice"/></svg><span>CAiCE™ Translator</span></li>
                        <li class="l1"><svg class="e"><use href="#exp"/></svg><svg class="i"><use href="#cogo"/></svg><span>Coordinate Geometry</span></li>
                        <li class="l1"><svg class="e"><use href="#col"/></svg><svg class="i"><use href="#globe"/></svg><span>Export KML</span></li>
                        <li class="l2"><i class="e"></i><svg class="i"><use href="#globe"/></svg><span class="sel">Export KML</span></li>
                        <li class="l1"><svg class="e"><use href="#exp"/></svg><svg class="i"><use href="#parc"/></svg><span>Parcels</span></li>
                        <li class="l1"><svg class="e"><use href="#exp"/></svg><svg class="i"><use href="#shared"/></svg><span>Shared Reference Point</span></li>
                        <li class="l1"><svg class="e"><use href="#exp"/></svg><svg class="i"><use href="#surface"/></svg><span>Surfaces</span></li>
                        <li class="l1"><svg class="e"><use href="#exp"/></svg><svg class="i"><use href="#survey"/></svg><span>Survey</span></li>
                        <li class="l1"><svg class="e"><use href="#exp"/></svg><svg class="i"><use href="#turnout"/></svg><span>Turnout Tools (Civil 3D 2022.0 and Earlier)</span></li>
                    </ul>
                </div>
                <div class="preview"><svg class="b"><use href="#bigglobe"/></svg>Export KML</div>
            </div>
            <nav class="side-tabs">
                <a href="#">Prospector</a>
                <a href="#">Settings</a>
                <a href="#">Survey</a>
                <a href="#" class="active">Toolbox</a>
            </nav>
        </aside>

        <!-- Drawing area -->
        <div class="canvas">
            <p class="viewport-label">[−][Top][2D Wireframe]</p>
            <svg class="ucs" viewBox="0 0 60 50"><path d="M6.500 12v34M9 45.500h36M3 42h7v7H3zM8 0l4 5v5M16 0l-4 5M43 36l9 9M52 36l-9 9"/></svg>
            <div class="viewcube">
                <svg viewBox="0 0 90 90">
                    <circle cx="45" cy="45" r="36" stroke="#484e54" stroke-width="8"/>
                    <path fill="#b5b8b9" d="M28 28h34v34H28z"/><path fill="#a8abac" d="M34 34h22v22H34z"/>
                </svg>
                <b class="n">N</b><b class="e">E</b><b class="s">S</b><b class="w">W</b><span>TOP</span>
            </div>
            <button class="wcs">WCS</button>
            <div class="navbar">
                <svg viewBox="0 0 22 142"><path d="M6 14h10v12H6zM8 18h6M8 22h6M11 33h1M7 44c0-7 7-7 9 0 0 7-7 9-10 4M6 60l10 9M16 60L6 69M7 82c4-7 8 0 3 5M11 93h1M5 100l6-5 6 5-6 6zM4 116h14v12H4zM4 120h14M8 116v12M13 116v12"/></svg>
            </div>
        </div>

        <!-- Transparent commands toolbar -->
        <aside class="rtools">
            <hr><svg class="i"><use href="#r1"/></svg><svg class="i"><use href="#r2"/></svg><svg class="i"><use href="#r3"/></svg><svg class="i"><use href="#r4"/></svg><svg class="i"><use href="#doc"/></svg><svg class="i"><use href="#r5"/></svg><svg class="i"><use href="#r5"/></svg><svg class="i"><use href="#r6"/></svg><svg class="i"><use href="#r6"/></svg><svg class="i"><use href="#r7"/></svg><svg class="i"><use href="#r6"/></svg><svg class="i"><use href="#r4"/></svg><svg class="i"><use href="#r8"/></svg>
            <hr class="lit"><svg class="i"><use href="#r7"/></svg>
            <hr class="lit"><svg class="i"><use href="#r8"/></svg><svg class="i"><use href="#r9"/></svg><svg class="i"><use href="#r9"/></svg>
            <hr class="lit"><svg class="i"><use href="#r10"/></svg><svg class="i"><use href="#r12"/></svg><svg class="i"><use href="#r10"/></svg><svg class="i"><use href="#r2"/></svg><svg class="i"><use href="#r11"/></svg><svg class="i"><use href="#r11"/></svg><svg class="i"><use href="#arc"/></svg>
            <hr><svg class="i"><use href="#r7"/></svg><svg class="i"><use href="#doc"/></svg><svg class="i"><use href="#r6"/></svg>
        </aside>

        <!-- Command line -->
        <div class="cmdline">
            <div class="cmd-handle"><i class="grip"></i><svg class="s"><use href="#x"/></svg><svg class="i"><use href="#wrench"/></svg></div>
            <div class="cmd-body"><i class="prompt"></i><svg class="c"><use href="#caret"/></svg><input type="text" placeholder="Type a command" aria-label="Command"></div>
        </div>

        <!-- Save As dialog -->
        <section class="dialog" role="dialog" aria-label="Save As">
            <header class="dlg-title"><svg class="i"><use href="#civil"/></svg>Save As<button aria-label="Close"><svg class="i"><use href="#xthin"/></svg></button></header>
            <div class="dlg-address">
                <svg class="i off"><use href="#left"/></svg>
                <svg class="i off"><use href="#right"/></svg>
                <svg class="s off"><use href="#chev"/></svg>
                <svg class="i"><use href="#up"/></svg>
                <div class="crumbs">
                    <svg class="i"><use href="#folder"/></svg><svg class="s"><use href="#chevr"/></svg><a href="#">This PC</a><svg class="s"><use href="#chevr"/></svg><a href="#">Local Disk (E:)</a><svg class="s"><use href="#chevr"/></svg><a href="#">chandra</a><svg class="s"><use href="#chevr"/></svg><a href="#">BLOCK BND</a><svg class="s"><use href="#chevr"/></svg>
                    <svg class="s drop"><use href="#chev"/></svg>
                    <button aria-label="Refresh"><svg class="i"><use href="#refresh"/></svg></button>
                </div>
                <div class="dlg-search"><svg class="i"><use href="#search"/></svg><input type="text" placeholder="Search BLOCK BND" aria-label="Search BLOCK BND"></div>
            </div>
            <div class="dlg-tools">
                <button>Organize <svg class="c"><use href="#caret"/></svg></button>
                <button>New folder</button>
                <button class="push" aria-label="Change view"><svg class="i"><use href="#view"/></svg></button>
                <svg class="c"><use href="#caret"/></svg>
                <button class="dlg-help" aria-label="Help"><svg class="i"><use href="#helpb"/></svg></button>
            </div>
            <div class="dlg-body">
                <ul class="places">
                    <li class="top"><svg class="i"><use href="#cloud"/></svg>OneDrive</li>
                    <li class="top pc"><svg class="i"><use href="#pc"/></svg>This PC</li>
                    <li><svg class="i"><use href="#obj"/></svg>3D Objects</li>
                    <li><svg class="i"><use href="#desk"/></svg>Desktop</li>
                    <li><svg class="i"><use href="#docs"/></svg>Documents</li>
                    <li><svg class="i"><use href="#down"/></svg>Downloads</li>
                    <li><svg class="i"><use href="#music"/></svg>Music</li>
                    <li><svg class="i"><use href="#pics"/></svg>Pictures</li>
                    <li><svg class="i"><use href="#video"/></svg>Videos</li>
                    <li><svg class="i"><use href="#diskc"/></svg>Local Disk (C:)</li>
                    <li><svg class="i"><use href="#disk"/></svg>New Volume (D:</li>
                    <li class="here"><svg class="i"><use href="#disk"/></svg>Local Disk (E:)</li>
                </ul>
                <div class="scroll places-scroll"><svg class="s"><use href="#chevup"/></svg><i></i><svg class="s"><use href="#chev"/></svg></div>
                <div class="files">
                    <svg class="s sort"><use href="#chevup"/></svg>
                    <table>
                        <thead><tr><th class="col-name">Name</th><th class="col-date">Date modified</th><th class="col-type">Type</th><th class="col-size">Size</th><th></th></tr></thead>
                        <tbody>
                            <tr><td><svg class="i"><use href="#folder"/></svg>KMLDATA</td><td>26-11-2022 14:34</td><td>File folder</td><td></td></tr>
                            <tr><td><svg class="i"><use href="#kmz"/></svg>BB_UTM25.03.22</td><td>04-05-2022 15:06</td><td>KMZ</td><td>30 KB</td></tr>
                            <tr><td><svg class="i"><use href="#kmz"/></svg>bnd_2</td><td>26-11-2022 14:28</td><td>KMZ</td><td>665 KB</td></tr>
                            <tr><td><svg class="i"><use href="#kmz"/></svg>FOREST IN UTM</td><td>20-08-2022 15:39</td><td>KMZ</td><td>18 KB</td></tr>
                            <tr><td><svg class="i"><use href="#kmz"/></svg>gare palama_7</td><td>26-03-2022 16:53</td><td>KMZ</td><td>8 KB</td></tr>
                            <tr><td><svg class="i"><use href="#kmz"/></svg>kml_12.11.22</td><td>12-11-2022 12:04</td><td>KMZ</td><td>1,056 KB</td></tr>
                            <tr><td><svg class="i"><use href="#kmz"/></svg>MINW _BNS_POINT</td><td>24-11-2022 14:32</td><td>KMZ</td><td>14 KB</td></tr>
                            <tr><td><svg class="i"><use href="#kmz"/></svg>ogl up date-151121</td><td>15-11-2022 14:59</td><td>KMZ</td><td>10 KB</td></tr>
                            <tr><td><svg class="i"><use href="#kmz"/></svg>ogl_bnd_3</td><td>21-10-2022 15:44</td><td>KMZ</td><td>154 KB</td></tr>
                            <tr><td><svg class="i"><use href="#kmz"/></svg>ogl_r_BND_15.11.22</td><td>15-11-2022 14:46</td><td>KMZ</td><td>10 KB</td></tr>
                            <tr><td><svg class="i"><use href="#kmz"/></svg>test mn_bnd</td><td>26-11-2022 11:00</td><td>KMZ</td><td>48 KB</td></tr>
                            <tr><td><svg class="i"><use href="#kmz"/></svg>test_1</td><td>26-11-2022 13:44</td><td>KMZ</td><td>1,401 KB</td></tr>
                            <tr><td><svg class="i"><use href="#kmz"/></svg>test1</td><td>24-11-2022 18:28</td><td>KMZ</td><td>43 KB</td></tr>
                            <tr><td><svg class="i"><use href="#kmz"/></svg>test11</td><td>26-10-2022 13:44</td><td>KMZ</td><td>57 KB</td></tr>
                        </tbody>
                    </table>
                </div>
                <div class="scroll files-scroll"><svg class="s"><use href="#chevup"/></svg><i></i><svg class="s"><use href="#chev"/></svg></div>
            </div>
            <form class="dlg-form">
                <label for="fname">File name:</label>
                <div class="field"><input id="fname" type="text" value="BLOK IN UTM ONLY"><svg class="s"><use href="#chev"/></svg></div>
                <label for="ftype">Save as type:</label>
                <div class="field filter"><select id="ftype"><option>Compressed Google Earth Files (*.kmz)</option></select><svg class="s"><use href="#chev"/></svg></div>
                <div class="actions">
                    <button type="button" class="hide"><svg class="s"><use href="#chevup"/></svg>Hide Folders</button>
                    <button type="submit" class="btn primary">Save</button>
                    <button type="button" class="btn">Cancel</button>
                </div>
            </form>
        </section>
    </section>

    <!-- Status bar -->
    <footer class="statusbar">
        <nav class="layout-tabs">
            <a href="#" class="active">Model</a>
            <a href="#">Layout1</a>
            <a href="#">Layout2</a>
            <button aria-label="New layout"><svg class="s"><use href="#plus"/></svg></button>
        </nav>
        <div class="status">
            <span>749157.717, 2450561.770, 0.000</span>
            <span>MODEL</span>
            <svg class="i"><use href="#grid"/></svg>
            <svg class="i"><use href="#dots"/></svg>
            <svg class="c"><use href="#caret"/></svg>
            <svg class="i"><use href="#ortho"/></svg>
            <svg class="i"><use href="#circ"/></svg>
            <svg class="c"><use href="#caret"/></svg>
            <svg class="i"><use href="#iso"/></svg>
            <svg class="c"><use href="#caret"/></svg>
            <svg class="i lit"><use href="#angle"/></svg>
            <svg class="i lit"><use href="#osnap"/></svg>
            <svg class="c"><use href="#caret"/></svg>
            <svg class="i lit"><use href="#annov"/></svg>
            <svg class="i"><use href="#annov"/></svg>
            <svg class="i"><use href="#anno"/></svg>
            <span>1:1000</span>
            <svg class="c"><use href="#caret"/></svg>
            <svg class="i"><use href="#gear"/></svg>
            <svg class="c"><use href="#caret"/></svg>
            <svg class="i"><use href="#plus"/></svg>
            <svg class="i"><use href="#ruler"/></svg>
            <span>Decimal</span>
            <svg class="c"><use href="#caret"/></svg>
            <svg class="i"><use href="#shapes"/></svg>
            <svg class="i"><use href="#r5"/></svg>
            <span>3.500</span>
            <svg class="i"><use href="#perf"/></svg>
            <svg class="i"><use href="#clean"/></svg>
            <svg class="i"><use href="#menu"/></svg>
        </div>
    </footer>
</main>

<!-- Windows taskbar -->
<footer class="taskbar">
    <button class="start" aria-label="Start"><svg viewBox="0 0 12 12"><path fill="#111" d="M0 1h5v5H0zM6 1h6v5H6zM0 7h5v5H0zM6 7h6v5H6z"/></svg></button>
    <div class="task-search">
        <svg class="i"><use href="#search"/></svg>
        <input type="text" placeholder="Type here to search" aria-label="Type here to search">
        <svg class="doodle" viewBox="0 0 36 22"><path fill="#f2b92e" d="M5 5l24-3 6 5-4 9 2 3-16 2-16-2 5-5-4-4z"/><path fill="#2a1d1a" d="M30 0l3 2-4 2-4 3 1 5-4 3-1 6-3-1 1-6-9 4-7 1 1-2 7-2 7-7-4-1 1-2 5 1 3-3 4-1z"/></svg>
    </div>
    <nav class="apps">
        <a href="#" class="run" aria-label="File Explorer"><svg viewBox="0 0 16 16"><path fill="#f2c044" d="M1 2h5l2 2h7v10H1z"/><path fill="#f9dc7a" d="M1 6h14v3H1z"/><path fill="#3f83b8" d="M3 9h10v5h-2v-3H5v3H3z"/></svg></a>
        <a href="#" aria-label="Chrome"><svg viewBox="0 0 16 16"><path fill="#dd4b3e" d="M8 8L1.500 4a7.500 7.500 0 0 1 13 0z"/><path fill="#f5c52c" d="M8 8h0l6.500-4A7.500 7.500 0 0 1 8 15.500z"/><path fill="#2e9b55" d="M8 8v7.500A7.500 7.500 0 0 1 1.500 4z"/><circle cx="8" cy="8" r="3.500" fill="#fff"/><circle cx="8" cy="8" r="2.500" fill="#3d7fe0"/></svg></a>
        <a href="#" aria-label="Edge"><svg viewBox="0 0 16 16"><circle cx="8" cy="8" r="7.500" fill="#1669b5"/><path fill="#35c1a8" d="M1 7a7 7 0 0 1 14.500 1c0 3-4 3-5 2 1-3-3-6-9.500-3z"/><path fill="#d8ecf5" d="M7 8c2-2 4 0 3 2 1 2 3 2 4 1-2 4-8 2-7-3z"/></svg></a>
        <a href="#" class="run active" aria-label="Civil 3D"><svg viewBox="0 0 16 16"><use href="#civil"/></svg></a>
        <a href="#" class="run" aria-label="Excel"><svg viewBox="0 0 16 16"><path fill="#fff" stroke="#1d7a45" d="M5.500 1.500h9v13h-9z"/><path fill="#1d7a45" d="M0 3l9-2v14l-9-2zM10 4h4v1h-4zM10 7h4v1h-4zM10 10h4v1h-4z"/><path stroke="#fff" stroke-width="1.500" d="M2.500 5l4 6M6.500 5l-4 6"/></svg></a>
        <a href="#" class="run" aria-label="Camtasia"><svg viewBox="0 0 16 16"><path fill="#12a150" d="M0 0h16v16H0z"/><path stroke="#fff" stroke-width="2.500" d="M12 5C9 2 4 4 4 8s5 6 8 3"/></svg></a>
        <a href="#" class="run" aria-label="Recorder"><svg viewBox="0 0 16 16"><path fill="#e23b2e" d="M0 0h16v16H0z"/><path stroke="#fff" stroke-width="2.500" d="M12 5C9 2 4 4 4 8s5 6 8 3"/></svg></a>
    </nav>
    <div class="tray">
        <svg class="weather" viewBox="0 0 14 14"><circle cx="7" cy="7" r="6" fill="#f3a72c"/><path stroke="#fbe3b0" stroke-width="1.500" d="M0 7h12M2 10h12"/></svg>
        <span>24°C&nbsp; Haze</span>
        <svg class="i first"><use href="#chevup"/></svg>
        <svg class="i" viewBox="0 0 12 12"><path stroke="#222" d="M2.500 3.500h7v6h-7zM4 1.500h4"/><circle cx="6" cy="6.500" r="1.500" stroke="#222"/></svg>
        <svg class="i" viewBox="0 0 12 12"><path fill="#111" d="M4 1h4v6H4zM5 8h2v3H5z"/><path stroke="#111" d="M2.500 6c0 4 7 4 7 0"/></svg>
        <svg class="i" viewBox="0 0 12 12"><path stroke="#222" d="M1.500 1.500h9v9h-9zM4 4h4v4H4z"/><circle cx="9" cy="9" r="2" fill="#2b6cb0"/></svg>
        <svg class="i" viewBox="0 0 12 12"><path stroke="#222" d="M3 2.500h8v6H3zM5 10.500h5M1 1v5h3"/></svg>
        <svg class="i" viewBox="0 0 12 12"><path stroke="#222" d="M1 4.500h2l3-3v9l-3-3H1z"/><path stroke="#888" d="M8 4v4M10 3v6"/></svg>
        <span class="lang">ENG</span>
        <span class="clock">13:36<br>27-11-2022</span>
        <span class="notif"><svg viewBox="0 0 12 12"><path fill="#111" d="M0 1h12v8H5l-2 2V9H0z"/><path stroke="#eee" d="M2 3.500h8M2 5.500h8"/></svg><b>8</b></span>
    </div>
</footer>

<script>
    // the file name starts selected, ready to be typed over
    const fname = document.getElementById("fname");
    fname.focus();
    fname.select();
</script>
</body>
</html>
```
FILE: styles.css
```css
* {
    box-sizing: border-box;
}
body {
    margin: 0;
    height: 100vh;
    display: flex;
    flex-direction: column;
    overflow: hidden;
    background: linear-gradient(90deg, #2b7cc0 0, #2f86cc 16%, #bfe3f2 20%, #2f86cc 28%, #b8dff0 48%, #3f93d2 80%, #0d4a86 100%) top / 100% 2px no-repeat, linear-gradient(#143b63, #0e5566 60%, #07303e);
    font-family: Lato, "Open Sans", sans-serif;
    font-size: 8px;
    line-height: 12px;
    color: #d5d8dc;
}
button, input, select {
    font: inherit;
    color: inherit;
    background: none;
    border: 0;
    padding: 0;
    margin: 0;
    outline: 0;
}
button {
    display: flex;
    align-items: center;
    white-space: nowrap;
}
a {
    color: inherit;
    text-decoration: none;
    white-space: nowrap;
}
h1, h2 {
    margin: 0;
    font-size: 8px;
    font-weight: normal;
}
ul {
    list-style: none;
    margin: 0;
    padding: 0;
}
svg {
    fill: none;
    display: block;
    flex: none;
}
.sprite {
    display: none;
}
.i { width: 11px; height: 11px; }
.s { width: 8px; height: 8px; }
.c { width: 6px; height: 6px; }
.b { width: 22px; height: 22px; }
.push { margin-left: auto; }
.grip {
    width: 2px;
    height: 10px;
    background: #6a7380;
}
.swatch {
    width: 9px;
    height: 9px;
    background: #fff;
}

.window {
    flex: 1;
    min-height: 0;
    margin: 2px 4px 0;
    display: flex;
    flex-direction: column;
    background: #222933;
}

/* Title bar */
.titlebar {
    height: 19px;
    display: flex;
    align-items: center;
}
.titlebar h1 {
    margin: 0 auto;
    color: #e2e4e7;
    white-space: nowrap;
}
.quick {
    display: grid;
    grid-template-columns: 33px 16px 16px 15px 16px 16px 17px 14px 11px 13px 8px 120px 10px 36px;
    align-items: center;
}
.app-badge {
    width: 26px;
    background: #6b1a50;
    color: #f0a8d5;
    font-size: 6px;
}
.app-badge b {
    display: inline-block;
    width: 12px;
    text-align: center;
    font-size: 8px;
    color: #fff;
    background: #c2128a;
}
.dim { color: #66707c; }
.workspace {
    width: 118px;
    height: 13px;
    background: #38414f;
    gap: 3px;
}
.workspace .c { margin-left: auto; }
.share {
    gap: 4px;
    color: #8cc4ee;
}
.infocenter {
    display: grid;
    grid-template-columns: 6px 122px 16px 14px 57px 11px 16px 13px 17px 15px 49px 16px 17px 14px;
    align-items: center;
}
.tri {
    border-left: 3px solid #ddd;
    border-top: 2px solid transparent;
    border-bottom: 2px solid transparent;
    width: 3px;
}
.infocenter input {
    width: 119px;
    height: 13px;
    padding-left: 2px;
    background: #434c5c;
    font-style: italic;
}
.infocenter input::placeholder { color: #b9bec6; }

/* Menus and ribbon tabs */
.menubar {
    height: 13px;
    display: grid;
    grid-template-columns: 27px 30px 33px 35px 39px 33px 35px 42px 57px 41px 44px 57px 41px 49px 45px 32px 49px 38px 45px 1fr auto;
    align-items: center;
    padding-left: 10px;
    border-bottom: 1px solid #303844;
    color: #b9bec5;
}
.doc-buttons {
    display: flex;
    gap: 1px;
    padding-right: 1px;
}
.ribbon-tabs {
    height: 16px;
    padding: 2px 0 0 3px;
    display: grid;
    grid-template-columns: 35px 33px 46px 39px 40px 30px 42px 39px 37px 26px 53px 52px 54px 30px 41px 64px 59px 55px 1fr;
    line-height: 14px;
    color: #b9bec5;
}
.ribbon-tabs a { padding-left: 6px; }
.ribbon-tabs .active {
    background: #3b4453;
    color: #fff;
    width: 33px;
}
.ribbon-tabs .geo {
    background: #17698f;
    color: #fff;
}
.ribbon-min {
    display: flex;
    align-items: center;
    gap: 2px;
    padding-left: 14px;
}
.ribbon-min i {
    width: 10px;
    height: 6px;
    background: #c9ccd1;
}

/* Ribbon */
.ribbon {
    display: flex;
    height: 66px;
    background: #3b4453;
}
.panel {
    border-right: 1px solid #303846;
    padding-top: 3px;
    color: #697380;
    flex: none;
}
.panel h2 {
    display: flex;
    align-items: center;
    justify-content: center;
    gap: 4px;
    height: 15px;
    color: #e0e3e6;
    white-space: nowrap;
}
.tools {
    display: flex;
    height: 48px;
}
.big {
    flex-direction: column;
    margin: 0 auto;
    padding-top: 1px;
    line-height: 10px;
    text-align: center;
}
.big .b { margin-bottom: 3px; }
.on {
    background: #3d5874;
    outline: 1px solid #4f7fa8;
    outline-offset: -1px;
}
.grid-tools {
    display: grid;
    grid-template-rows: repeat(3, 16px);
    grid-auto-flow: column;
}
.grid-tools button, .layer-row button { gap: 3px; }
.grid-tools .c { color: #aab0b8; }
.p-palettes { width: 75px; }
.p-palettes .big { margin: 0 0 0 3px; width: 38px; }
.mini {
    display: grid;
    grid-template-columns: 16px 16px;
    grid-template-rows: repeat(3, 16px);
}
.mini button { justify-content: center; }
.p-explore { width: 37px; }
.p-optimize { width: 53px; }
.p-ground { width: 86px; }
.p-ground .tools { padding-left: 18px; }
.p-design { width: 214px; }
.p-design .tools { padding-left: 5px; grid-template-columns: 70px 65px 1fr; }
.p-profile { width: 90px; }
.p-profile .tools { padding-left: 9px; }
.p-draw { width: 78px; }
.p-draw .tools { padding-left: 4px; grid-template-columns: 25px 27px 1fr; }
.p-modify { width: 167px; }
.p-modify .tools { padding-left: 4px; grid-template-columns: 48px 47px 49px 1fr; }
.wide { width: 40px; }
.wide .c { margin-left: auto; }
.p-layers { width: 182px; }
.p-layers .big { margin: 0 0 0 2px; width: 38px; }
.layer-tools { padding: 2px 0 0 2px; }
.layer-combo {
    width: 138px;
    height: 14px;
    gap: 2px;
    padding-left: 1px;
    background: #465063;
}
.layer-combo .c { margin: 0 2px 0 auto; color: #ddd; }
.layer-combo .swatch { background: #c6c9cd; margin: 0 2px; }
.y { color: #b3a070; }
.layer-row {
    display: flex;
    align-items: center;
    height: 16px;
    gap: 5px;
    padding-left: 2px;
}
.p-clip { width: 56px; border: 0; }
.p-clip .big { margin: 0 8px; }
.p-clip .big .c { color: #ccc; }

/* Drawing tabs */
.doc-tabs {
    height: 19px;
    display: flex;
    align-items: center;
    gap: 15px;
    padding-left: 16px;
}
.doc-tabs .active {
    display: flex;
    align-items: center;
    gap: 3px;
    height: 17px;
    margin-right: -4px;
    padding: 0 3px 0 9px;
    background: linear-gradient(110deg, transparent 4px, #3b4453 5px);
    font-weight: bold;
    color: #fff;
}

/* Toolbars */
.toolbars {
    height: 38px;
    background: #3b4453;
    padding-top: 1px;
}
.tb-row {
    display: grid;
    grid-template-columns: 5px 15px 16px 15px 16px 15px 9px 13px 202px 15px 16px 1fr;
    align-items: center;
    height: 17px;
    padding-left: 2px;
    color: #e0e3e6;
}
.props {
    grid-template-columns: 4px 104px 111px 87px 1fr;
    height: 19px;
}
.combo {
    height: 15px;
    gap: 2px;
    padding: 0 3px;
    background: #c6c7c8;
    color: #75787b;
}
.combo .s { margin-left: auto; color: #a0a3a6; }
.combo .swatch { outline: 1px solid #888; outline-offset: -1px; margin-right: 1px; }
.o { color: #e8a222; }
.layer { width: 199px; height: 14px; }
.color { width: 101px; }
.ltype { width: 107px; }
.lweight { width: 84px; }
.plot { width: 79px; padding-left: 7px; }
.rule {
    height: 1px;
    width: 40px;
    background: #333;
    margin-right: 2px;
}
.lweight .rule { width: 24px; }

/* Work area */
.work {
    flex: 1;
    min-height: 0;
    display: flex;
    position: relative;
}
.toolspace {
    width: 227px;
    display: flex;
    background: #3b4453;
}
.ts-main {
    flex: 1;
    display: flex;
    flex-direction: column;
    padding: 0 0 2px 1px;
}
.ts-main h2 {
    height: 16px;
    display: flex;
    align-items: center;
    gap: 4px;
    padding-left: 3px;
    color: #e6e8ea;
}
.ts-bar {
    display: flex;
    align-items: center;
    gap: 7px;
    height: 18px;
    padding: 0 4px 0 2px;
    color: #e0e3e6;
}
.tree-box {
    flex: 1;
    background: #fff;
    padding: 2px 1px;
    color: #222;
}
.tree {
    display: grid;
    height: 160px;
    grid-template-rows: repeat(12, 1fr);
    padding-left: 4px;
    background: linear-gradient(#c4c4c4, #c4c4c4) 8px 8px / 1px 27px no-repeat, linear-gradient(#c4c4c4, #c4c4c4) 20px 48px / 1px 104px no-repeat;
}
.tree li {
    display: flex;
    align-items: center;
    gap: 4px;
    white-space: nowrap;
}
.tree .e { width: 8px; height: 8px; flex: none; }
.tree .l1 { padding-left: 12px; }
.tree .l2 { padding-left: 25px; }
.tree .i { margin-right: -2px; }
.sel { background: #a3a3a3; flex: 1; }
.tree span { padding-left: 2px; }
.preview {
    display: flex;
    gap: 4px;
    height: 64px;
    margin-top: 4px;
    padding: 3px 2px;
    background: #f0f0f0;
    color: #222;
}
.side-tabs {
    width: 17px;
    padding: 16px 3px 0 1px;
}
.side-tabs a {
    display: block;
    height: 80px;
    writing-mode: vertical-rl;
    transform: rotate(180deg);
    text-align: center;
    line-height: 13px;
    background: #2c3442;
    color: #a8aeb7;
    margin-bottom: 1px;
}
.side-tabs .active {
    background: #3b4453;
    color: #e6e8ea;
    outline: 1px solid #2c3442;
}

/* Drawing area */
.canvas {
    flex: 1;
    position: relative;
    background: #212830;
    border-top: 1px solid #1a1f26;
}
.viewport-label {
    margin: 3px;
    color: #d2d5d8;
}
.ucs {
    position: absolute;
    left: 6px;
    bottom: 7px;
    width: 60px;
    height: 50px;
    stroke: #c9ccce;
}
.viewcube {
    position: absolute;
    right: 11px;
    top: 9px;
    width: 90px;
    height: 90px;
    font-family: "Liberation Sans", Arial, sans-serif;
}
.viewcube b, .viewcube span {
    position: absolute;
    width: 14px;
    text-align: center;
    font-size: 13px;
    color: #b9bcbe;
}
.viewcube .n { left: 38px; top: 2px; }
.viewcube .s { left: 38px; top: 77px; height: 12px; }
.viewcube .w { left: 1px; top: 39px; }
.viewcube .e { left: 75px; top: 39px; }
.viewcube span {
    left: 35px;
    width: 20px;
    top: 39px;
    font-size: 8px;
    font-weight: bold;
    color: #3c4145;
}
.wcs {
    position: absolute;
    right: 40px;
    top: 112px;
    width: 31px;
    height: 12px;
    padding-left: 3px;
    border-radius: 3px;
    background: #9b9fa6;
    color: #5f646b;
}
.navbar {
    position: absolute;
    right: 3px;
    top: 141px;
    width: 22px;
    background: #5b6164;
    border-radius: 2px;
}
.navbar svg { stroke: #4d5255; }
.rtools {
    width: 22px;
    padding: 2px 6px 75px 4px;
    display: flex;
    flex-direction: column;
    justify-content: space-between;
    align-items: center;
    background: #3b4453;
    color: #cfd4da;
}
.rtools hr {
    width: 11px;
    height: 2px;
    margin: 0;
    border: 0;
    background: #69717e;
}
.rtools .lit { background: #d5d8dc; }

/* Command line */
.cmdline {
    position: absolute;
    left: 127px;
    right: 0;
    bottom: 0;
    height: 17px;
    display: flex;
}
.cmd-handle {
    width: 39px;
    display: flex;
    align-items: center;
    gap: 6px;
    padding-left: 3px;
    background: #5f646b;
    color: #f2f2f2;
}
.cmd-body {
    flex: 1;
    display: flex;
    align-items: center;
    gap: 2px;
    padding-left: 3px;
    background: rgba(240, 241, 240, .75);
    color: #555;
}
.prompt {
    width: 10px;
    height: 8px;
    border: 1px solid #888;
    border-top-width: 2px;
}
.cmd-body input {
    flex: 1;
    padding-left: 2px;
    font: italic 8px "Liberation Mono", monospace;
}
.cmd-body input::placeholder { color: #666; }

/* Save As dialog */
.dialog {
    position: absolute;
    left: 420px;
    top: 5px;
    width: 628px;
    background: #fff;
    color: #222;
    box-shadow: 0 0 4px #111;
}
.dlg-title {
    display: flex;
    align-items: center;
    gap: 3px;
    height: 19px;
    padding: 0 4px 0 5px;
}
.dlg-title button { margin-left: auto; }
.dlg-address {
    display: grid;
    grid-template-columns: 18px 18px 13px 17px 1fr 135px;
    align-items: center;
    height: 29px;
    padding: 0 7px 2px 6px;
}
.dlg-address > * { justify-self: start; }
.off { color: #c9c9c9; }
.crumbs, .dlg-search {
    display: flex;
    align-items: center;
    height: 20px;
    border: 1px solid #e2e2e2;
}
.dlg-address .crumbs {
    justify-self: stretch;
    gap: 4px;
    margin-right: 9px;
}
.crumbs .i + .s { margin-left: -3px; }
.crumbs .drop { margin-left: auto; margin-right: 2px; }
.crumbs button {
    width: 21px;
    height: 18px;
    justify-content: center;
    border-left: 1px solid #e2e2e2;
}
.dlg-search {
    width: 135px;
    gap: 7px;
    padding-left: 8px;
    color: #777;
}
.dlg-search input {
    min-width: 0;
    width: 100px;
}
.dlg-search input::placeholder, .task-search input::placeholder { color: #5a5a5a; }
.dlg-tools {
    display: flex;
    align-items: center;
    gap: 20px;
    height: 21px;
    padding: 0 9px 1px 11px;
    background: #f4f6f8;
    color: #333;
}
.dlg-tools button { gap: 4px; }
.dlg-tools .push { margin-right: -14px; }
.dlg-help { margin-left: -1px; }
.dlg-body {
    display: flex;
    height: 207px;
    overflow: hidden;
}
.places {
    width: 92px;
    padding-top: 5px;
    overflow: hidden;
}
.places li {
    display: flex;
    align-items: center;
    gap: 4px;
    height: 16px;
    padding-left: 20px;
    white-space: nowrap;
}
.places .top { padding-left: 15px; }
.places .pc { margin-top: 5px; }
.places .here { background: #d9d9d9; }
.scroll {
    display: flex;
    flex-direction: column;
    align-items: center;
    width: 10px;
    padding: 1px 0;
    background: #f0f0f0;
}
.scroll i {
    width: 10px;
    background: #cdcdcd;
}
.places-scroll i { height: 94px; margin: 73px 0 auto; }
.files-scroll i { height: 164px; margin: 1px 0 auto; }
.files {
    flex: 1;
    position: relative;
    overflow: hidden;
}
.sort {
    position: absolute;
    left: 94px;
    top: -2px;
    color: #888;
}
.files table {
    width: 100%;
    table-layout: fixed;
    border-collapse: collapse;
    color: #6d6d6d;
}
.files th {
    height: 17px;
    padding: 0 0 0 4px;
    border-right: 1px solid #e8e8e8;
    font-weight: normal;
    text-align: left;
}
.files th:last-child { border: 0; }
.files .col-name { width: 185px; padding-left: 15px; }
.files .col-date { width: 96px; }
.files .col-type { width: 79px; }
.files .col-size { width: 54px; }
.files td {
    height: 14px;
    padding: 0 5px 0 4px;
    white-space: nowrap;
}
.files tbody::before {
    content: "";
    display: block;
    height: 3px;
}
.files td:first-child {
    display: flex;
    align-items: center;
    gap: 3px;
    padding-left: 15px;
    color: #222;
}
.files td:nth-child(4) { text-align: right; }
.dlg-form {
    display: grid;
    grid-template-columns: 79px 1fr;
    gap: 2px 4px;
    align-items: center;
    padding: 7px 3px 9px 0;
    background: #f0f0f0;
}
.dlg-form label { text-align: right; }
.field {
    display: flex;
    align-items: center;
    height: 15px;
    border: 1px solid #5b8fc0;
    background: #fff;
}
.field input, .field select {
    flex: 1;
    height: 12px;
    padding: 0 2px;
    appearance: none;
}
.field .s { margin-right: 1px; color: #555; }
.filter { background: #e4eaf2; border-color: #8aa9c8; }
.field input::selection {
    background: rgba(0, 103, 184, .99);
    color: #fff;
}
.actions {
    grid-column: 1 / 3;
    display: flex;
    align-items: center;
    gap: 9px;
    margin-top: 12px;
    padding: 0 9px 0 7px;
}
.hide {
    gap: 4px;
    margin-right: auto;
    padding-top: 4px;
}
.btn {
    width: 57px;
    height: 16px;
    justify-content: center;
    background: #e1e1e1;
    border: 1px solid #b5b5b5;
}
.primary { border: 2px solid #2f78b5; }

/* Status bar */
.statusbar {
    display: flex;
    justify-content: space-between;
    align-items: center;
    height: 25px;
    padding-bottom: 1px;
}
.layout-tabs {
    display: flex;
    align-items: center;
    gap: 16px;
    padding-left: 7px;
}
.layout-tabs a { line-height: 16px; }
.layout-tabs .active {
    padding: 0 8px 0 9px;
    margin-right: -8px;
    background: linear-gradient(110deg, transparent 4px, #3b4453 5px);
    font-weight: bold;
    color: #fff;
}
.status {
    display: grid;
    grid-template-columns: 125px 34px 16px 15px 13px 17px 15px 10px 16px 12px 18px 14px 13px 17px 16px 16px 26px 12px 16px 12px 19px 16px 36px 14px 18px 17px 29px 18px 16px 11px;
    align-items: center;
    justify-items: start;
    height: 16px;
    padding: 0 4px;
    background: #333b49;
    color: #e2e4e7;
    white-space: nowrap;
}
.status .lit {
    outline: 2px solid #4d86bd;
    background: #4d86bd;
}

/* Taskbar */
.taskbar {
    height: 27px;
    display: flex;
    align-items: center;
    background: linear-gradient(90deg, #d3e3ec, #dbe0e2 60%, #cfe3ea);
    color: #222;
}
.start {
    width: 33px;
    height: 100%;
    justify-content: center;
}
.start svg { width: 12px; height: 12px; }
.task-search {
    display: flex;
    align-items: center;
    gap: 8px;
    width: 227px;
    height: 26px;
    padding: 0 8px 0 7px;
    background: #fff;
    font-size: 10px;
}
.task-search input {
    flex: 1;
    min-width: 0;
}
.doodle { width: 36px; height: 22px; }
.apps {
    display: flex;
    height: 27px;
    margin-left: 34px;
}
.apps a {
    display: flex;
    align-items: center;
    justify-content: center;
    width: 33px;
}
.apps svg { width: 16px; height: 16px; }
.apps .run { box-shadow: inset 0 -2px #2f7fc0; }
.apps .active { background: #f4f7f8; }
.tray {
    display: flex;
    align-items: center;
    gap: 5px;
    margin-left: auto;
    padding-right: 14px;
    font-size: 9px;
    white-space: nowrap;
}
.weather { width: 14px; height: 14px; }
.tray .first { margin-left: 9px; }
.lang, .clock { font-size: 8px; }
.clock {
    width: 46px;
    margin-right: 4px;
    text-align: center;
}
.notif {
    position: relative;
    width: 13px;
}
.notif b {
    position: absolute;
    right: -4px;
    bottom: -4px;
    width: 9px;
    height: 9px;
    border-radius: 5px;
    background: #ddd;
    font-size: 7px;
    line-height: 9px;
    text-align: center;
}
```
